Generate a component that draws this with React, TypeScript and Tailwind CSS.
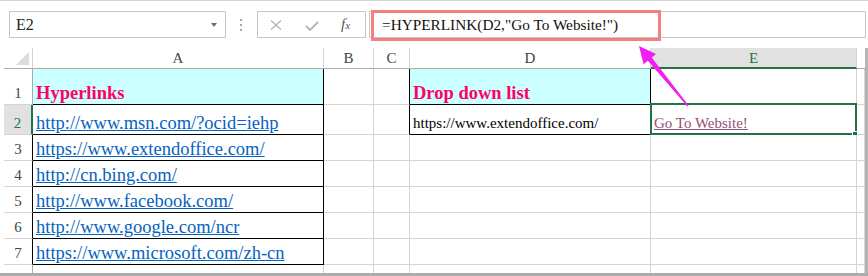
import React from 'react';

// border colour classes, per side so they never fight each other
const GR = 'border-r-[#d4d4d4]';
const GB = 'border-b-[#d4d4d4]';
const KR = 'border-r-black';
const KB = 'border-b-black';

type Tone = 'title' | 'link' | 'plain' | 'visited';

type CellSpec = {
  text?: string;
  tone?: Tone;
  cyan?: boolean;
  r: string;
  b: string;
  selected?: boolean;
};

const toneClass: Record<Tone, string> = {
  title: 'text-[18.5px] font-bold text-[#ff0066] pb-[2px]',
  link: 'text-[18.5px] text-[#0563c1] underline pb-[2px]',
  plain: 'text-[15px] text-black pb-[3px]',
  visited: 'text-[15px] text-[#954f72] underline pb-[3px]',
};

const links = [
  'https://www.extendoffice.com/',
  'http://cn.bing.com/',
  'http://www.facebook.com/',
  'http://www.google.com/ncr',
  'https://www.microsoft.com/zh-cn',
];

const plainRow = (): CellSpec[] => [
  { r: GR, b: GB },
  { r: GR, b: GB },
  { r: GR, b: GB },
  { r: GR, b: GB },
  { r: GR, b: GB },
];

const rows: { n: number; head: string; cells: CellSpec[] }[] = [
  {
    n: 1,
    head: 'border-r-[#ababab]',
    cells: [
      { text: 'Hyperlinks', tone: 'title', cyan: true, r: KR, b: KB },
      { r: GR, b: GB },
      { r: KR, b: GB },
      { text: 'Drop down list', tone: 'title', cyan: true, r: KR, b: KB },
      { r: GR, b: GB },
      { r: GR, b: GB },
    ],
  },
  {
    n: 2,
    head: 'border-r-2 border-r-[#217346] bg-[#e1e1e1] text-[#217346]',
    cells: [
      { text: 'http://www.msn.com/?ocid=iehp', tone: 'link', r: KR, b: KB },
      { r: GR, b: GB },
      { r: KR, b: GB },
      { text: 'https://www.extendoffice.com/', tone: 'plain', r: KR, b: KB },
      { text: 'Go To Website!', tone: 'visited', r: GR, b: GB, selected: true },
      { r: GR, b: GB },
    ],
  },
  ...links.map((url, i) => ({
    n: i + 3,
    head: 'border-r-black',
    cells: [{ text: url, tone: 'link' as Tone, r: KR, b: KB }, ...plainRow()],
  })),
  { n: 8, head: 'border-r-[#ababab]', cells: [{ r: GR, b: GB }, ...plainRow()] },
];

function Toolbar() {
  return (
    <div className="h-[48px] border-t border-t-[#d5d5d5] flex items-start pt-[10px]">
      {/* name box */}
      <div className="ml-[9px] w-[217px] h-[27px] border border-[#c6c6c6] flex items-center justify-between pl-[6px] pr-[8px]">
        <span className="text-[16px] text-[#222] leading-none">E2</span>
        <span className="w-0 h-0 border-l-[3px] border-r-[3px] border-t-[4px] border-l-transparent border-r-transparent border-t-[#6d6d6d]" />
      </div>
      <div className="ml-[14px] mt-[8px] flex flex-col gap-[3px]">
        <span className="w-[2px] h-[2px] bg-[#a6a6a6]" />
        <span className="w-[2px] h-[2px] bg-[#a6a6a6]" />
        <span className="w-[2px] h-[2px] bg-[#a6a6a6]" />
      </div>
      {/* cancel / enter / insert function */}
      <div className="ml-[15px] w-[109px] h-[27px] border border-[#c6c6c6] flex items-center">
        <svg width="12" height="10" viewBox="0 0 12 10" className="ml-[12px]">
          <path d="M1 0.5 L11 9.5 M11 0.5 L1 9.5" stroke="#b4b4b4" strokeWidth="1.3" fill="none" />
        </svg>
        <svg width="14" height="10" viewBox="0 0 14 10" className="ml-[23px] mt-[2px]">
          <path d="M1 5 L5 9 L13 1" stroke="#b4b4b4" strokeWidth="1.8" fill="none" />
        </svg>
        <span className="ml-[22px] italic text-[15px] text-[#555] leading-none">
          f<span className="text-[11px]">x</span>
        </span>
      </div>
      {/* formula bar */}
      <div className="ml-[3px] w-[497px] h-[27px] border border-[#c6c6c6] flex items-center pl-[12px]">
        <span className="text-[15.3px] text-[#111] leading-none whitespace-nowrap">=HYPERLINK(D2,"Go To Website!")</span>
      </div>
    </div>
  );
}

function Cell({ spec }: { spec: CellSpec }) {
  return (
    <div
      className={`relative flex items-end border-r border-b ${spec.r} ${spec.b} ${spec.cyan ? 'bg-[#ccffff]' : 'bg-white'}`}
    >
      {spec.text && (
        <span className={`pl-[3px] leading-none whitespace-nowrap ${toneClass[spec.tone ?? 'plain']}`}>
          {spec.text}
        </span>
      )}
      {spec.selected && (
        <>
          <div className="absolute left-[-1px] top-[-2px] w-[207px] h-[32px] border-2 border-[#217346]" />
          <div className="absolute left-[201px] top-[26px] w-[7px] h-[7px] bg-white p-[1px]">
            <div className="w-[5px] h-[5px] bg-[#217346]" />
          </div>
        </>
      )}
    </div>
  );
}

export default function App() {
  const letters = ['A', 'B', 'C', 'D'];
  return (
    <div className="relative w-[868px] h-[276px] overflow-hidden bg-white font-[family-name:Liberation_Serif,Times_New_Roman,serif]">
      <Toolbar />

      <div className="flex h-[225px]">
        <div className="ml-[4px] w-[861px] h-[225px] overflow-hidden">
          <div className="grid grid-cols-[29px_291px_50px_36px_241px_206px_8px] grid-rows-[21px_36px_30px_26px_26px_26px_26px_26px_26px]">
            {/* select-all corner */}
            <div className="border-r border-b border-r-[#d4d4d4] border-b-[#ababab] flex items-end justify-end pr-[3px] pb-[3px]">
              <svg width="13" height="13" viewBox="0 0 13 13">
                <path d="M13 0 L13 13 L0 13 Z" fill="#dcdcdc" />
              </svg>
            </div>
            {letters.map((l) => (
              <div
                key={l}
                className="border-r border-b border-r-[#d4d4d4] border-b-[#ababab] flex items-center justify-center text-[15px] text-[#444] leading-none pt-[1px]"
              >
                {l}
              </div>
            ))}
            <div className="border-r border-b-2 border-r-[#d4d4d4] border-b-[#217346] bg-[#e1e1e1] flex items-center justify-center text-[15px] text-[#217346] leading-none pt-[2px]">
              E
            </div>
            <div className="border-b border-b-[#ababab]" />

            {rows.map((row) => (
              <React.Fragment key={row.n}>
                <div
                  className={`border-r border-b border-b-[#d4d4d4] flex items-end justify-center pb-[3px] text-[15px] leading-none text-[#444] ${row.head}`}
                >
                  {row.n}
                </div>
                {row.cells.map((c, i) => (
                  <Cell key={i} spec={c} />
                ))}
              </React.Fragment>
            ))}
          </div>
        </div>
        <div className="w-[3px] bg-[#b3b3b3]" />
      </div>
      <div className="h-[3px] bg-[#acacac]" />

      {/* annotation: red frame around the formula */}
      <div className="absolute left-[371px] top-[10px] w-[290px] h-[31px] border-[3px] border-[#f37f7f]" />

      {/* annotation: magenta arrow */}
      <svg className="absolute left-0 top-0 pointer-events-none" width="868" height="276" viewBox="0 0 868 276">
        <polygon
          points="639,46 656,54 651.7,57.6 688.6,105.5 687.4,106.5 647.9,60.8 643.6,64.3"
          fill="#f01ef0"
        />
      </svg>
    </div>
  );
}
